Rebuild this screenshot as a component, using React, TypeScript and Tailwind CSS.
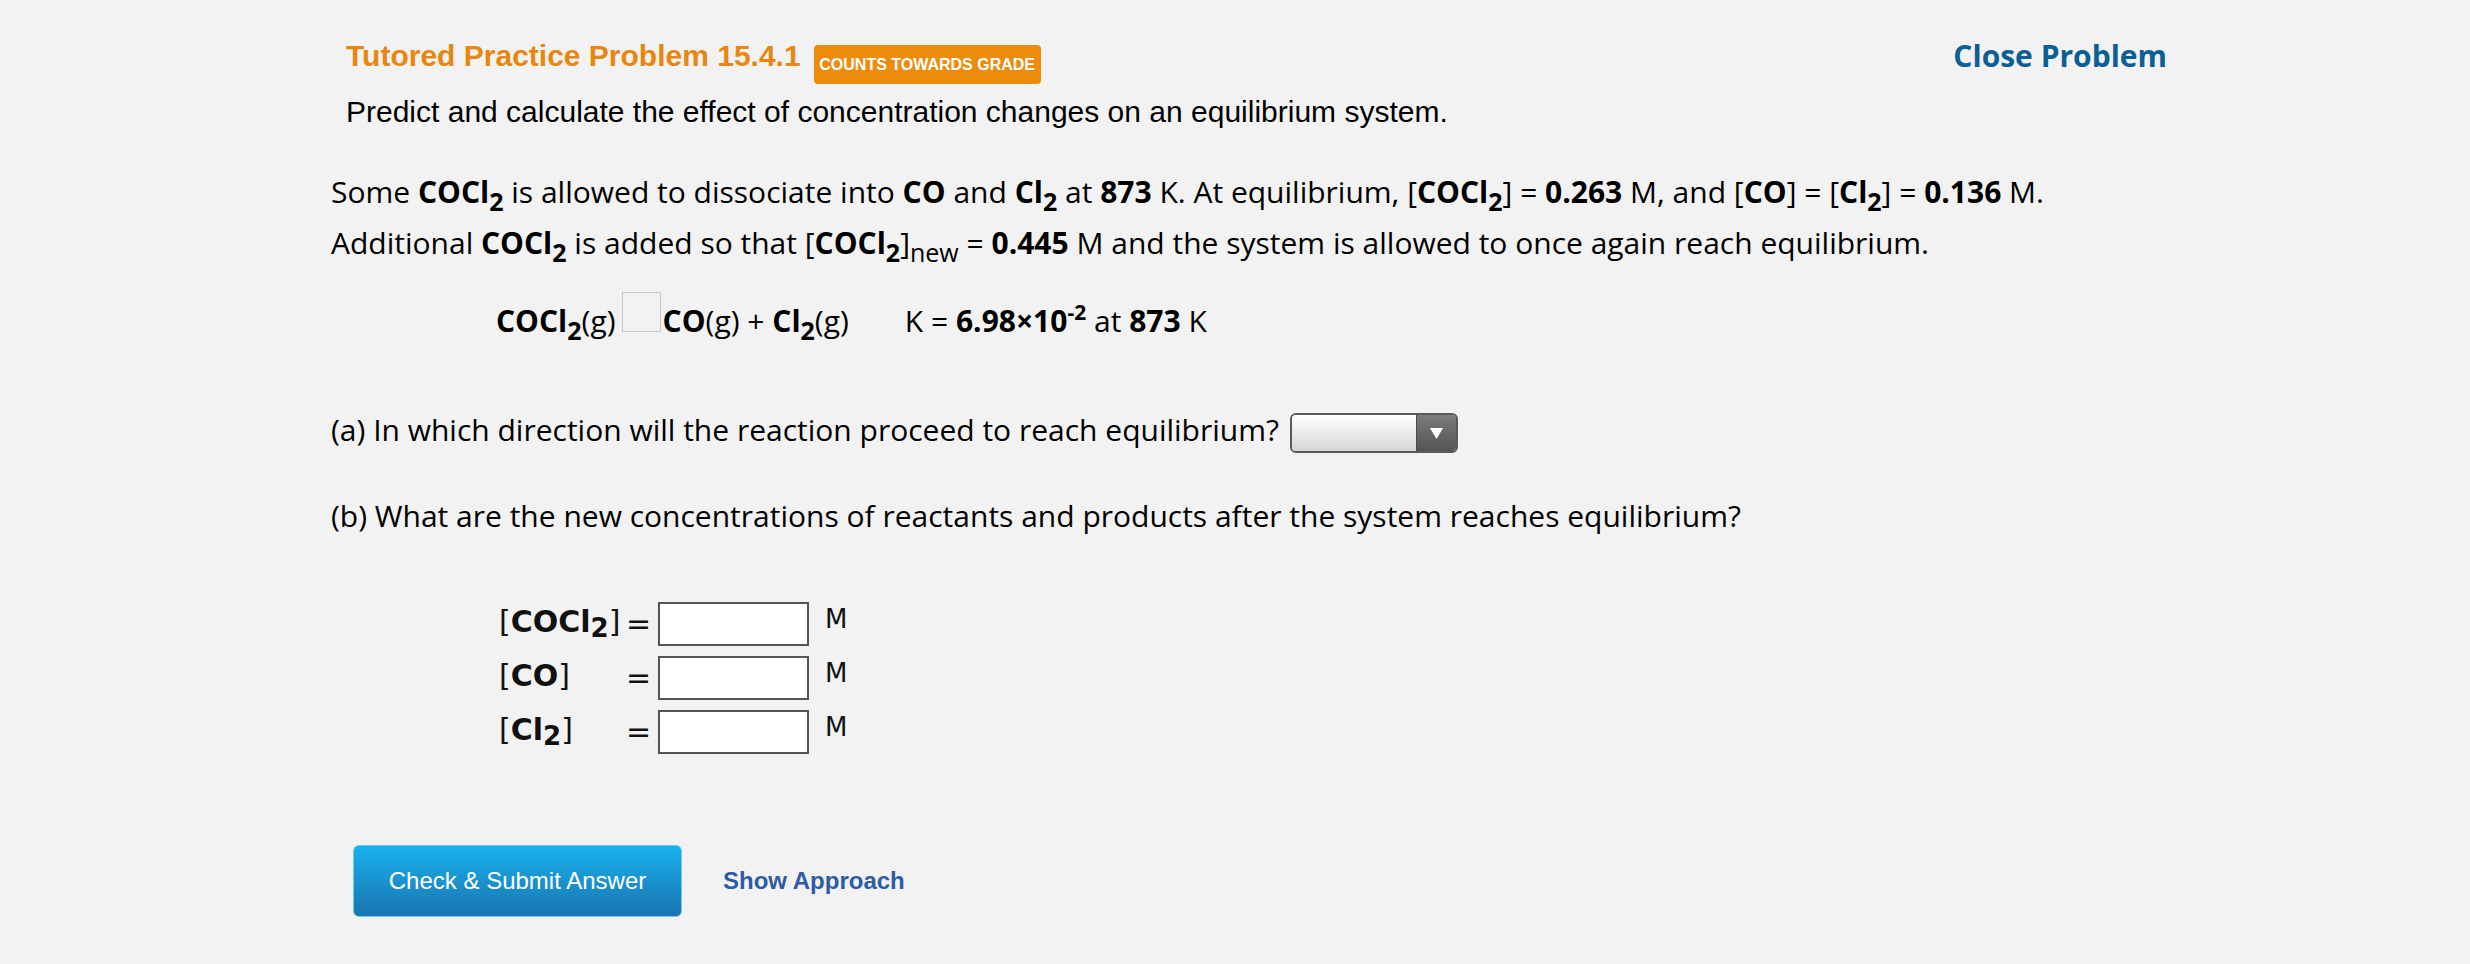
import React from 'react';

const openSans = "font-['Open_Sans',sans-serif]";

function Sub({ children }: { children: React.ReactNode }) {
  return <span className="relative top-[8px] text-[25px] leading-none">{children}</span>;
}

function Chem({ children }: { children: React.ReactNode }) {
  return <b className="font-bold">{children}</b>;
}

const ROWS: { label: React.ReactNode; key: string }[] = [
  { key: 'cocl2', label: <>[<b className="font-bold">COCl<span className="relative top-[5px] text-[26px] leading-none">2</span></b>]</> },
  { key: 'co', label: <>[<b className="font-bold">CO</b>]</> },
  { key: 'cl2', label: <>[<b className="font-bold">Cl<span className="relative top-[5px] text-[26px] leading-none">2</span></b>]</> },
];

export default function App() {
  return (
    <div className="min-h-[964px] w-full bg-[#f2f2f2] text-black">
      <div className="ml-[331px] w-[1836px]">
        {/* header */}
        <div className="flex h-[76px] items-start justify-between pl-[15px] pt-[36px]">
          <div className="flex items-start">
            <h1 className="font-['Liberation_Sans',Arial,sans-serif] text-[30px] font-bold leading-[40px] text-[#e8870f]">
              Tutored Practice Problem 15.4.1
            </h1>
            <span className="ml-[13px] mt-[9px] flex h-[39px] w-[227px] items-center justify-center rounded-[4px] bg-[#ec8b0c] font-['Liberation_Sans',Arial,sans-serif] text-[16px] font-bold text-white">
              COUNTS TOWARDS GRADE
            </span>
          </div>
          <a className={`${openSans} cursor-pointer text-[30px] font-bold leading-[40px] text-[#0b5e96]`}>Close Problem</a>
        </div>

        <p className="mt-[16px] pl-[15px] font-['Liberation_Sans',Arial,sans-serif] text-[30px] leading-[40px]">
          Predict and calculate the effect of concentration changes on an equilibrium system.
        </p>

        {/* problem statement */}
        <div className={`${openSans} text-[30px] leading-[51px]`}>
          <p className="mt-[34px]">
            Some <Chem>COCl<Sub>2</Sub></Chem> is allowed to dissociate into <Chem>CO</Chem> and <Chem>Cl<Sub>2</Sub></Chem> at{' '}
            <Chem>873</Chem> K. At equilibrium, [<Chem>COCl<Sub>2</Sub></Chem>] = <Chem>0.263</Chem> M, and [<Chem>CO</Chem>] = [
            <Chem>Cl<Sub>2</Sub></Chem>] = <Chem>0.136</Chem> M.
            <br />
            Additional <Chem>COCl<Sub>2</Sub></Chem> is added so that [<Chem>COCl<Sub>2</Sub></Chem>]<Sub>new</Sub> ={' '}
            <Chem>0.445</Chem> M and the system is allowed to once again reach equilibrium.
          </p>

          <p className="mt-[27px] pl-[165px]">
            <Chem>COCl<Sub>2</Sub></Chem>(g)
            <span className="-mt-[12px] ml-[6px] mr-[2px] inline-block h-[40px] w-[39px] border border-[#c8c8c8] align-baseline" />
            <Chem>CO</Chem>(g) + <Chem>Cl<Sub>2</Sub></Chem>(g)
            <span className="ml-[56px]">
              K = <Chem>6.98×10</Chem>
              <b className="relative top-[-12px] text-[21px] font-bold leading-none">-2</b> at <Chem>873</Chem> K
            </span>
          </p>

          <div className="mt-[58px] flex items-start">
            <span>(a) In which direction will the reaction proceed to reach equilibrium?</span>
            <div className="ml-[11px] mt-[9px] flex h-[40px] w-[168px] overflow-hidden rounded-[6px] border-2 border-[#5a5a5a]">
              <div className="flex-1 bg-linear-to-b from-white to-[#d6d6d6]" />
              <div className="flex w-[40px] items-center justify-center border-l border-[#4a4a4a] bg-linear-to-b from-[#7c7c7c] to-[#545454]">
                <svg width="13" height="11" viewBox="0 0 13 11">
                  <path d="M0 0h13L6.5 11z" fill="#fff" />
                </svg>
              </div>
            </div>
          </div>

          <p className="mt-[35px]">
            (b) What are the new concentrations of reactants and products after the system reaches equilibrium?
          </p>
        </div>

        {/* answer inputs */}
        <div className="mt-[61px] flex flex-col gap-[10px] pl-[168px] font-['DejaVu_Sans',Verdana,sans-serif] text-[30px] text-[#111]">
          {ROWS.map((r) => (
            <div key={r.key} className="flex h-[44px] items-center">
              <span className="relative -top-[2px] w-[127px] leading-none">{r.label}</span>
              <span className="w-[32px] leading-none">=</span>
              <input type="text" className="h-[44px] w-[151px] border-2 border-[#555] bg-white outline-none" />
              <span className="ml-[16px] -mt-[10px] text-[26px] leading-none">M</span>
            </div>
          ))}
        </div>

        {/* actions */}
        <div className="mt-[91px] flex items-center pl-[22px]">
          <button
            type="button"
            className="h-[72px] w-[329px] rounded-[6px] border border-[#6cc8f0] bg-linear-to-b from-[#16b1ed] to-[#1a75b1] font-['Liberation_Sans',Arial,sans-serif] text-[24px] text-white"
          >
            Check &amp; Submit Answer
          </button>
          <a className="ml-[41px] cursor-pointer font-['Liberation_Sans',Arial,sans-serif] text-[24px] font-bold text-[#2e5ca4]">
            Show Approach
          </a>
        </div>
      </div>
    </div>
  );
}
